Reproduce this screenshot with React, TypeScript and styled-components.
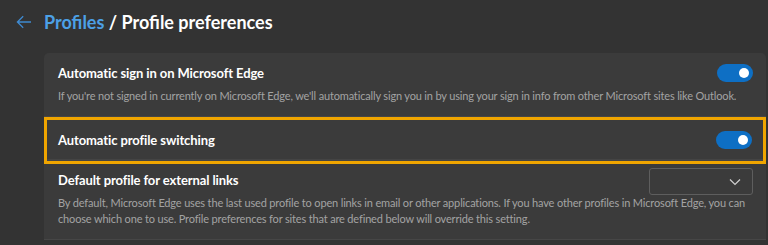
import React, { useState } from "react";
import styled, { createGlobalStyle } from "styled-components";

const GlobalStyle = createGlobalStyle`
  html, body {
    margin: 0;
    padding: 0;
    background: #333333;
    font-family: Lato, "Open Sans", Arial, sans-serif;
    color: #ffffff;
  }
`;

const Page = styled.div`
  width: 768px;
  height: 245px;
  overflow: hidden;
`;

const Header = styled.div`
  display: flex;
  align-items: center;
  gap: 12px;
  height: 44px;
  padding-left: 16px;
`;

const BackButton = styled.button`
  display: flex;
  align-items: center;
  justify-content: center;
  width: 16px;
  height: 16px;
  padding: 0;
  border: none;
  background: none;
  cursor: pointer;
`;

const Title = styled.h1`
  margin: 0;
  font-size: 18px;
  font-weight: 700;
  color: #ffffff;

  a {
    color: #4ca0e6;
    text-decoration: none;
  }
`;

const Card = styled.div`
  margin: 9px 2px 0 44px;
  background: #3b3b3b;
  border-radius: 5px 5px 0 0;
`;

const Row = styled.div<{ $padTop: number }>`
  display: flex;
  flex-direction: column;
  gap: 5px;
  padding: ${(p) => p.$padTop}px 13px 12px 14px;
  border-bottom: 1px solid #464646;
`;

const HighlightRow = styled.div`
  display: flex;
  align-items: center;
  box-sizing: border-box;
  height: 47px;
  padding: 0 11px 2px 11px;
  border: 3px solid #f0a500;
  box-shadow: inset 0 -2px 0 #444444;
`;

const RowTop = styled.div`
  flex: 1;
  display: flex;
  align-items: flex-start;
  justify-content: space-between;
  min-height: 20px;
`;

const Label = styled.div`
  font-size: 13px;
  font-weight: 700;
  line-height: 20px;
  letter-spacing: -0.1px;
  color: #ffffff;
`;

const Desc = styled.div`
  font-size: 11px;
  line-height: 16px;
  letter-spacing: -0.16px;
  color: #a3a3a3;
`;

const Toggle = styled.button<{ $on: boolean }>`
  position: relative;
  flex-shrink: 0;
  width: 36px;
  height: 18px;
  margin-top: 1px;
  padding: 0;
  border: none;
  border-radius: 9px;
  background: ${(p) => (p.$on ? "#0e6fc4" : "#5a5a5a")};
  cursor: pointer;

  &::after {
    content: "";
    position: absolute;
    top: 4px;
    left: ${(p) => (p.$on ? "22px" : "4px")};
    width: 10px;
    height: 10px;
    border-radius: 50%;
    background: #ffffff;
  }
`;

const Select = styled.div`
  display: flex;
  align-items: center;
  justify-content: flex-end;
  flex-shrink: 0;
  width: 104px;
  height: 27px;
  box-sizing: border-box;
  padding-right: 11px;
  margin: -2px 0 -5px;
  border: 1px solid #5e5e5e;
  border-radius: 3px;
`;

export default function App() {
  const [autoSignIn, setAutoSignIn] = useState(true);
  const [autoSwitch, setAutoSwitch] = useState(true);

  return (
    <Page>
      <GlobalStyle />
      <Header>
        <BackButton aria-label="Back">
          <svg width="16" height="14" viewBox="0 0 16 14" fill="none">
            <path d="M15 7H1.8M7.2 1.2L1.4 7l5.8 5.8" stroke="#3f8ad0" strokeWidth="1.3" />
          </svg>
        </BackButton>
        <Title>
          <a href="#">Profiles</a> / Profile preferences
        </Title>
      </Header>
      <Card>
        <Row $padTop={10}>
          <RowTop>
            <Label>Automatic sign in on Microsoft Edge</Label>
            <Toggle $on={autoSignIn} onClick={() => setAutoSignIn(!autoSignIn)} />
          </RowTop>
          <Desc>
            If you're not signed in currently on Microsoft Edge, we'll automatically sign you in by using your sign in
            info from other Microsoft sites like Outlook.
          </Desc>
        </Row>
        <HighlightRow>
          <RowTop>
            <Label>Automatic profile switching</Label>
            <Toggle $on={autoSwitch} onClick={() => setAutoSwitch(!autoSwitch)} />
          </RowTop>
        </HighlightRow>
        <Row $padTop={6}>
          <RowTop>
            <Label>Default profile for external links</Label>
            <Select>
              <svg width="12" height="8" viewBox="0 0 12 8" fill="none">
                <path d="M1 1.5l5 5 5-5" stroke="#d0d0d0" strokeWidth="1.2" />
              </svg>
            </Select>
          </RowTop>
          <Desc>
            By default, Microsoft Edge uses the last used profile to open links in email or other applications. If you have
            other profiles in Microsoft Edge, you can choose which one to use. Profile preferences for sites that are
            defined below will override this setting.
          </Desc>
        </Row>
      </Card>
    </Page>
  );
}
